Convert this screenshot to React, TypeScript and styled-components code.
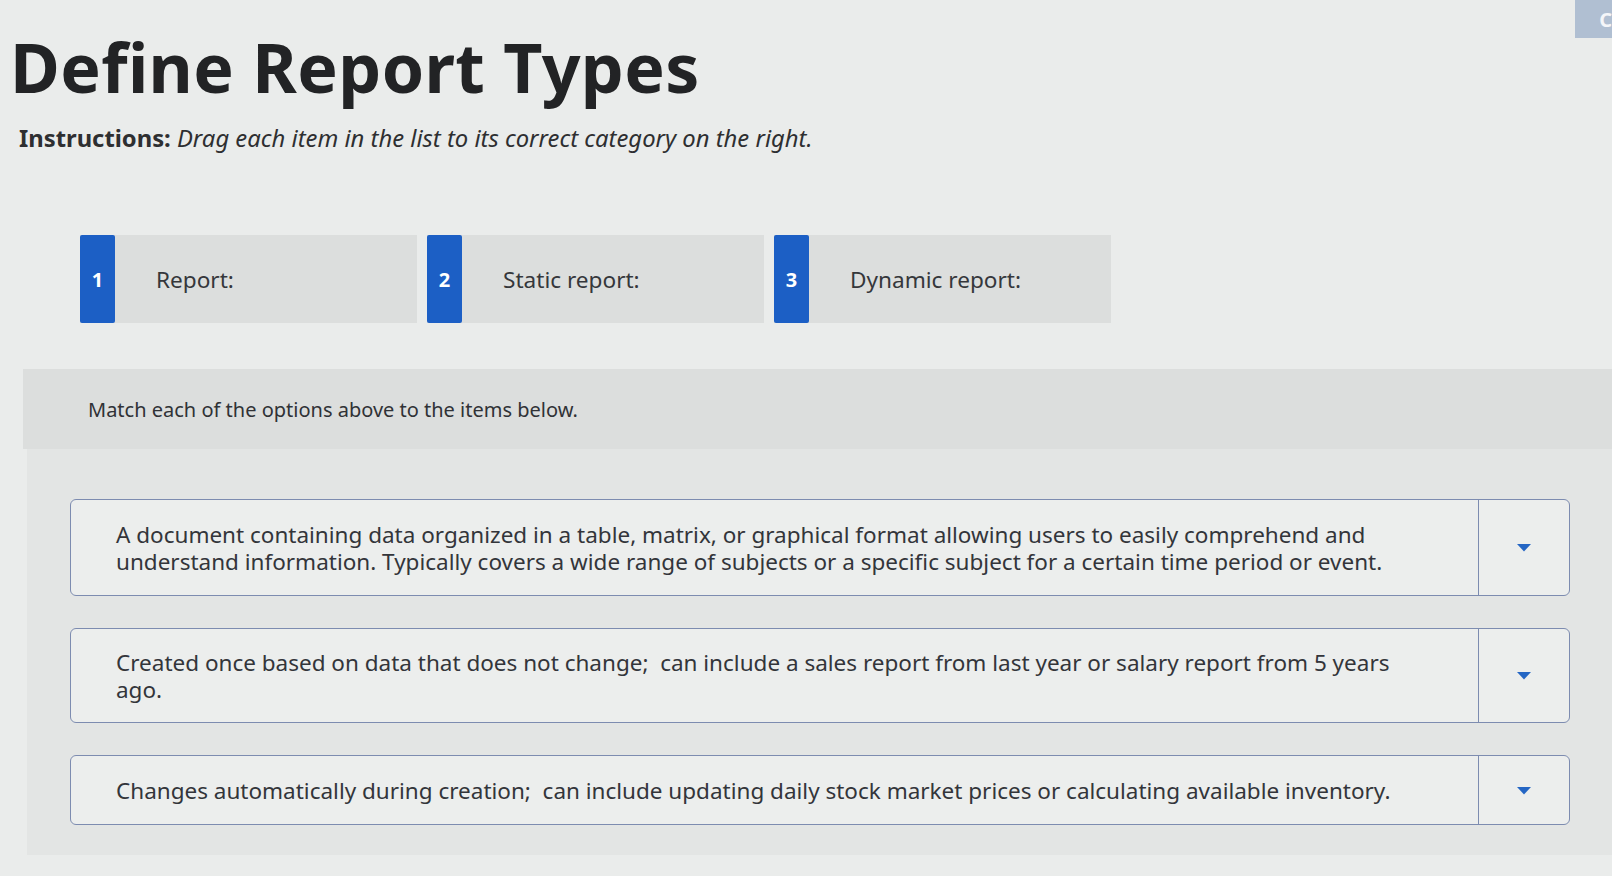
import React from "react";
import styled, { createGlobalStyle } from "styled-components";

const Global = createGlobalStyle`
  html, body { margin: 0; padding: 0; }
  body {
    background: #eaeceb;
    font-family: "Noto Sans", "Open Sans", "Liberation Sans", sans-serif;
    color: #2e2f31;
    width: 1612px;
    height: 876px;
    overflow: hidden;
  }
`;

const Page = styled.div`
  position: relative;
  width: 1612px;
  height: 876px;
  display: flex;
  flex-direction: column;
`;

const CornerTab = styled.div`
  position: absolute;
  top: 0;
  right: 0;
  width: 37px;
  height: 38px;
  background: #b0bfd2;
  color: #f4f6f9;
  font: 700 20px "Noto Sans", sans-serif;
  display: flex;
  align-items: center;
  justify-content: flex-end;
  overflow: hidden;
`;

const Title = styled.h1`
  margin: 24px 0 0 10px;
  font-size: 68px;
  font-weight: 700;
  letter-spacing: 0.4px;
  line-height: 86px;
  color: #222325;
`;

const Instructions = styled.p`
  margin: 13px 0 0 19px;
  font-size: 23.8px;
  line-height: 30px;
  color: #2e2f31;
  b { font-weight: 700; }
  i { font-style: italic; }
`;

const ChipRow = styled.div`
  display: flex;
  gap: 10px;
  margin: 82px 0 0 80px;
`;

const Chip = styled.div`
  display: flex;
  width: 337px;
  height: 88px;
  background: #dcdedd;
`;

const Badge = styled.div`
  width: 35px;
  background: #1c5fc5;
  color: #fff;
  font-size: 20px;
  font-weight: 700;
  display: flex;
  align-items: center;
  justify-content: center;
  border-radius: 2px;
`;

const ChipLabel = styled.div`
  display: flex;
  align-items: center;
  padding-left: 41px;
  font-size: 22.6px;
  color: #35373b;
`;

const Panel = styled.div`
  margin: 46px 0 21px 23px;
  flex: 1;
  display: flex;
  flex-direction: column;
`;

const PanelHeader = styled.div`
  height: 80px;
  background: #dcdedd;
  display: flex;
  align-items: center;
  padding-left: 65px;
  font-size: 20px;
  color: #303236;
`;

const PanelBody = styled.div`
  flex: 1;
  margin-left: 4px;
  background: #e3e5e4;
  display: flex;
  flex-direction: column;
  gap: 32px;
  padding: 50px 42px 0 43px;
`;

const Item = styled.div<{ $h: number }>`
  display: flex;
  height: ${(p) => p.$h}px;
  border: 1.5px solid #7d8cb0;
  border-radius: 6px;
  background: #eceeed;
`;

const ItemText = styled.div`
  flex: 1;
  display: flex;
  align-items: center;
  padding: 0 80px 0 45px;
  font-size: 22.5px;
  line-height: 27px;
  color: #33353a;
  white-space: pre-wrap;
`;

const Toggle = styled.div`
  width: 90px;
  border-left: 1.5px solid #7d8cb0;
  display: flex;
  align-items: center;
  justify-content: center;
`;

const Caret = () => (
  <svg width="16" height="9" viewBox="0 0 16 9">
    <path d="M1 1h14L8 8.5z" fill="#2466c4" />
  </svg>
);

const chips = ["Report:", "Static report:", "Dynamic report:"];

const items = [
  {
    h: 95,
    text: "A document containing data organized in a table, matrix, or graphical format allowing users to easily comprehend and understand information. Typically covers a wide range of subjects or a specific subject for a certain time period or event.",
  },
  {
    h: 93,
    text: "Created once based on data that does not change;  can include a sales report from last year or salary report from 5 years ago.",
  },
  {
    h: 68,
    text: "Changes automatically during creation;  can include updating daily stock market prices or calculating available inventory.",
  },
];

export default function App() {
  return (
    <Page>
      <Global />
      <CornerTab>C</CornerTab>
      <Title>Define Report Types</Title>
      <Instructions>
        <b>Instructions:</b> <i>Drag each item in the list to its correct category on the right.</i>
      </Instructions>
      <ChipRow>
        {chips.map((c, i) => (
          <Chip key={c}>
            <Badge>{i + 1}</Badge>
            <ChipLabel>{c}</ChipLabel>
          </Chip>
        ))}
      </ChipRow>
      <Panel>
        <PanelHeader>Match each of the options above to the items below.</PanelHeader>
        <PanelBody>
          {items.map((it) => (
            <Item key={it.text} $h={it.h}>
              <ItemText>{it.text}</ItemText>
              <Toggle>
                <Caret />
              </Toggle>
            </Item>
          ))}
        </PanelBody>
      </Panel>
    </Page>
  );
}
